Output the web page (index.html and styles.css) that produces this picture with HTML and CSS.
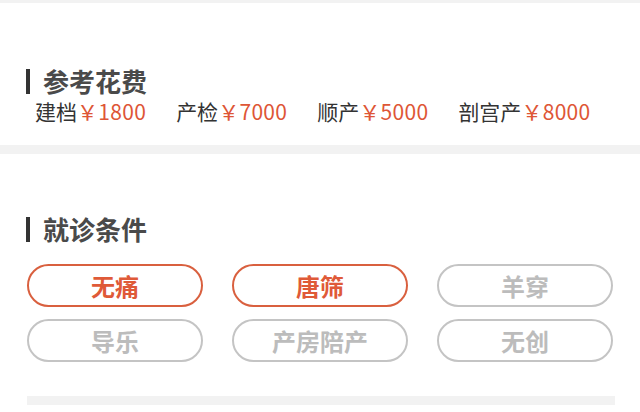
FILE: index.html
```html
<!DOCTYPE html>
<html lang="zh-CN">
<head>
<meta charset="utf-8">
<title>孕产服务</title>
<link rel="stylesheet" href="styles.css">
</head>
<body>
  <div class="page">
    <section class="card cost">
      <h2 class="heading">参考花费</h2>
      <ul class="prices">
        <li class="price"><span class="label">建档</span><span class="amount">￥1800</span></li>
        <li class="price"><span class="label">产检</span><span class="amount">￥7000</span></li>
        <li class="price"><span class="label">顺产</span><span class="amount">￥5000</span></li>
        <li class="price"><span class="label">剖宫产</span><span class="amount">￥8000</span></li>
      </ul>
    </section>
    <section class="card terms">
      <h2 class="heading">就诊条件</h2>
      <div class="tags">
        <span class="tag on">无痛</span>
        <span class="tag on">唐筛</span>
        <span class="tag">羊穿</span>
        <span class="tag">导乐</span>
        <span class="tag">产房陪产</span>
        <span class="tag">无创</span>
      </div>
      <div class="divider"></div>
    </section>
  </div>
</body>
</html>
```
FILE: styles.css
```css
* {
  box-sizing: border-box;
}

html, body {
  margin: 0;
  padding: 0;
}

body {
  background: #f2f2f2;
  font-family: "Noto Sans CJK SC", "Noto Sans", sans-serif;
  color: #333;
}

.page {
  padding-top: 3px;
  display: flex;
  flex-direction: column;
  gap: 9px;
}

.card {
  background: #fff;
  padding: 0 27px 0 26px;
}

.cost {
  padding-top: 61px;
  padding-bottom: 21px;
}

.terms {
  padding-top: 58px;
  padding-bottom: 7px;
}

.heading {
  margin: 0;
  display: flex;
  align-items: center;
  height: 34px;
  font-size: 26px;
  font-weight: 700;
  color: #4a4a4a;
  line-height: 34px;
}

.heading::before {
  content: "";
  width: 4px;
  height: 25px;
  background: #333;
  margin-right: 13px;
}

.prices {
  list-style: none;
  margin: 0;
  padding: 0 0 0 9px;
  display: flex;
  gap: 30px;
  height: 26px;
  line-height: 26px;
  font-size: 21px;
}

.price .label {
  color: #333;
}

.price .amount {
  color: #de5636;
  letter-spacing: 0.3px;
}

.tags {
  margin: 18px 0 0 1px;
  display: grid;
  grid-template-columns: repeat(3, 1fr);
  column-gap: 29px;
  row-gap: 12px;
}

.tag {
  height: 43px;
  border: 2px solid #c4c4c4;
  border-radius: 22px;
  display: flex;
  align-items: center;
  justify-content: center;
  font-size: 24px;
  font-weight: 700;
  color: #bcbcbc;
}

.tag.on {
  border-color: #d9603f;
  color: #df5a38;
}

.divider {
  margin-top: 34px;
  margin-left: 1px;
  margin-right: -2px;
  height: 9px;
  background: #f2f2f2;
}
```
